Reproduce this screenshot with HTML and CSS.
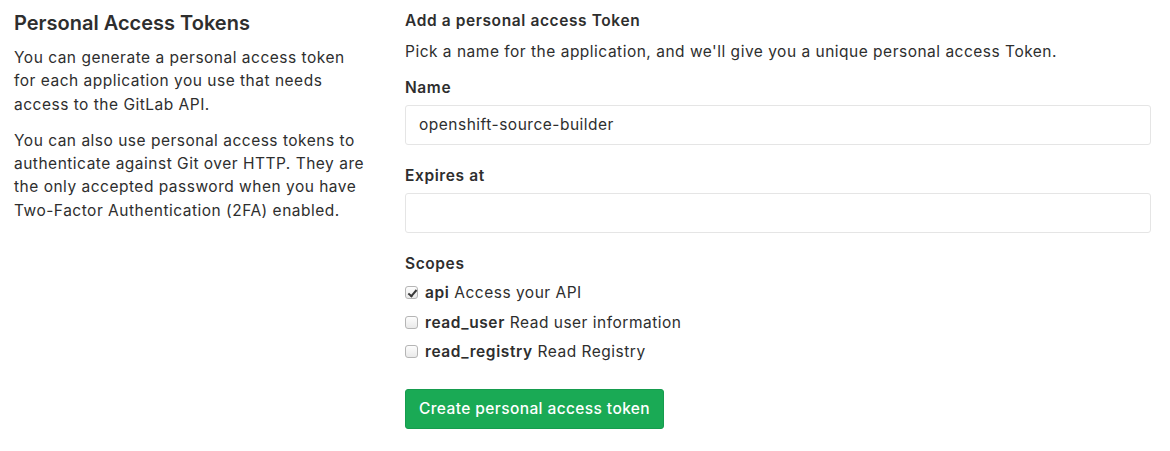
FILE: index.html
```html
<!DOCTYPE html>
<html lang="en">
<head>
<meta charset="utf-8">
<title>Personal Access Tokens</title>
<link rel="stylesheet" href="styles.css">
</head>
<body>
<div class="page">
  <aside class="intro">
    <h3 class="intro-title">Personal Access Tokens</h3>
    <p>You can generate a personal access token for each application you use that needs access to the GitLab API.</p>
    <p>You can also use personal access tokens to authenticate against Git over HTTP. They are the only accepted password when you have Two-Factor Authentication (2FA) enabled.</p>
  </aside>
  <form class="token-form">
    <h4 class="form-title">Add a personal access Token</h4>
    <p class="form-help">Pick a name for the application, and we'll give you a unique personal access Token.</p>
    <div class="field">
      <label class="field-label" for="name">Name</label>
      <input class="field-input" id="name" type="text" value="openshift-source-builder">
    </div>
    <div class="field">
      <label class="field-label" for="expires">Expires at</label>
      <input class="field-input" id="expires" type="text" value="">
    </div>
    <div class="field scopes">
      <div class="field-label">Scopes</div>
      <label class="scope"><input class="check" type="checkbox" checked><span><b>api</b> Access your API</span></label>
      <label class="scope"><input class="check" type="checkbox"><span><b>read_user</b> Read user information</span></label>
      <label class="scope"><input class="check" type="checkbox"><span><b>read_registry</b> Read Registry</span></label>
    </div>
    <button class="btn-create" type="button">Create personal access token</button>
  </form>
</div>
</body>
</html>
```
FILE: styles.css
```css
* { box-sizing: border-box; }
html, body { margin: 0; background: #fff; }
body {
  font-family: Inter, "Liberation Sans", sans-serif;
  font-size: 15.5px;
  line-height: 23.25px;
  letter-spacing: 0.5px;
  color: #2e2e2e;
}
.page {
  display: flex;
  padding: 9px 19px 0 14px;
}
.intro {
  width: 353px;
  flex: none;
  margin-right: 38px;
}
.intro-title {
  margin: 0 0 9px;
  font-size: 20px;
  line-height: 28px;
  font-weight: 600;
  letter-spacing: 0;
}
.intro p { margin: 0 0 13px; }
.token-form { flex: 1; }
.form-title {
  margin: 0 0 8px;
  font-size: 15.5px;
  font-weight: 600;
  letter-spacing: 0.6px;
}
.form-help { margin: 0 0 12px; }
.field { margin-bottom: 20px; }
.field-label {
  display: block;
  font-weight: 600;
  margin-bottom: 6px;
  letter-spacing: 0.6px;
}
.field-input {
  display: block;
  width: 100%;
  height: 40px;
  border: 1px solid #e5e5e5;
  border-radius: 3px;
  padding: 0 13px;
  font: inherit;
  letter-spacing: 0.5px;
  color: #2e2e2e;
  outline: none;
}
.field + .field { margin-top: -1px; }
.field.scopes { margin-bottom: 26px; }
.scope {
  display: flex;
  align-items: center;
  margin-bottom: 6px;
}
.scope b { font-weight: 600; letter-spacing: 0.6px; }
.check {
  appearance: none;
  -webkit-appearance: none;
  flex: none;
  width: 13px;
  height: 13px;
  margin: 0 7px 0 0;
  border: 1px solid #b5b5b5;
  border-radius: 3px;
  background: linear-gradient(#fdfdfd, #e9e9e9);
  position: relative;
}
.check:checked::after {
  content: "";
  position: absolute;
  left: 3.5px;
  top: 0.5px;
  width: 3px;
  height: 7px;
  border: solid #3a3a3a;
  border-width: 0 2px 2px 0;
  transform: rotate(40deg);
}
.btn-create {
  display: block;
  margin: 0;
  height: 40px;
  padding: 0 13px;
  background: #1aaa55;
  border: 1px solid #169c4e;
  border-radius: 3px;
  color: #fff;
  font: inherit;
  font-weight: 500;
  font-size: 15.5px;
  letter-spacing: 0.4px;
}
```
